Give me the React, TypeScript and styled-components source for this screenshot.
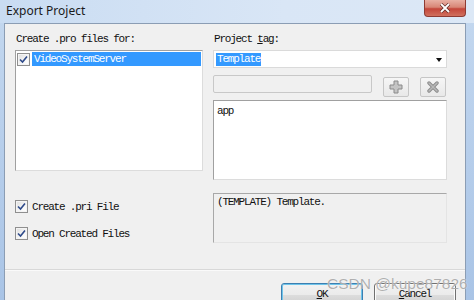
import React, { FC } from 'react'
import styled, { createGlobalStyle } from 'styled-components'

const GlobalStyle = createGlobalStyle`
  html, body {
    margin: 0;
    padding: 0;
    background: #f0f0f0;
  }
  body {
    width: 474px;
    height: 300px;
    overflow: hidden;
  }
`

const Window = styled.div`
  position: relative;
  width: 474px;
  height: 300px;
  display: grid;
  grid-template-rows: 23px 1fr;
  background: linear-gradient(to bottom, #c4d8ef 0%, #b9d0ec 40%, #a9c4e6 100%);
  overflow: hidden;
`

const TitleBar = styled.div`
  display: flex;
  align-items: flex-start;
  justify-content: space-between;
  padding-left: 6px;
  padding-right: 8px;
  background: linear-gradient(to right, #c9dcf2 0%, #d9e6f6 60%, #dce8f6 100%);
`

const Title = styled.span`
  margin-top: 3px;
  font-family: 'Noto Sans', 'Liberation Sans', sans-serif;
  font-size: 12px;
  line-height: 16px;
  color: #1a1a1a;
`

const CloseButton = styled.div`
  width: 42px;
  height: 17px;
  display: flex;
  align-items: center;
  justify-content: center;
  border: 1px solid #8e3b33;
  border-top: none;
  border-radius: 0 0 4px 4px;
  box-sizing: border-box;
  background: linear-gradient(to bottom, #e8b0a4 0%, #d88676 45%, #c4463a 55%, #d0705e 100%);
`

const Client = styled.div`
  margin: 0 8px 0 4px;
  display: grid;
  grid-template-rows: 246px 1fr;
  background: #f0f0f0;
  border: 1px solid #8b9db4;
  border-bottom: none;
`

const Main = styled.div`
  display: grid;
  grid-template-columns: 188px 234px;
  column-gap: 10px;
  padding: 9px 0 0 10px;
  border-bottom: 1px solid #d8d8d8;
`

const Column = styled.div`
  display: flex;
  flex-direction: column;
`

const Mono = styled.span`
  font-family: 'Liberation Mono', 'Courier New', monospace;
  font-size: 11px;
  letter-spacing: -1.2px;
  line-height: 12px;
  color: #111;
  white-space: pre;
`

const Label = styled(Mono)`
  display: block;
  height: 12px;
  margin-left: 1px;
`

const BoxText = styled(Mono)`
  display: block;
`

const Mnemonic = styled.span`
  text-decoration: underline;
`

const ListBox = styled.div<{ $height: number; $top: number }>`
  margin-top: ${p => p.$top}px;
  height: ${p => p.$height}px;
  box-sizing: border-box;
  background: #fff;
  border: 1px solid #a0a0a0;
  border-right-color: #dcdcdc;
  border-bottom-color: #dcdcdc;
  padding: 1px;
`

const ListRow = styled.div`
  display: flex;
  align-items: center;
  height: 14px;
`

const Selected = styled(Mono)`
  flex: 1;
  height: 14px;
  line-height: 14px;
  margin-left: 2px;
  padding-left: 2px;
  background: #3399ff;
  color: #fff;
`

const Box = styled.span`
  width: 11px;
  height: 11px;
  flex: none;
  display: flex;
  align-items: center;
  justify-content: center;
  border: 1px solid #8f8f8f;
  background: linear-gradient(135deg, #dcdcdc 0%, #f7f7f7 60%, #ffffff 100%);
  box-shadow: inset 0 0 0 1px #f4f4f4;
`

const CheckRow = styled.label<{ $top: number }>`
  display: flex;
  align-items: center;
  gap: 4px;
  margin-top: ${p => p.$top}px;
  height: 13px;
`

const Combo = styled.div`
  margin-top: 5px;
  height: 18px;
  box-sizing: border-box;
  display: flex;
  align-items: center;
  justify-content: space-between;
  padding: 0 4px 0 2px;
  background: #fff;
  border: 1px solid #dadada;
`

const Highlight = styled(Mono)`
  background: #3399ff;
  color: #fff;
  line-height: 13px;
  padding: 0 1px;
`

const Arrow = styled.span`
  width: 0;
  height: 0;
  margin-top: 2px;
  border-left: 3.5px solid transparent;
  border-right: 3.5px solid transparent;
  border-top: 4px solid #111;
`

const InputRow = styled.div`
  margin-top: 7px;
  display: flex;
  align-items: flex-start;
  height: 22px;
`

const Input = styled.div`
  width: 159px;
  height: 18px;
  box-sizing: border-box;
  border: 1px solid #c8c8c8;
  border-radius: 2px;
  background: #f0f0f0;
`

const IconButton = styled.div<{ $left: number }>`
  margin-top: 2px;
  margin-left: ${p => p.$left}px;
  width: 26px;
  height: 20px;
  box-sizing: border-box;
  display: flex;
  align-items: center;
  justify-content: center;
  border: 1px solid #c6c6c6;
  border-radius: 2px;
  background: linear-gradient(to bottom, #f6f6f6, #e8e8e8);
`

const Description = styled.div`
  margin-top: 13px;
  height: 50px;
  box-sizing: border-box;
  padding: 2px 3px;
  border: 1px solid #a8a8a8;
  border-right-color: #e4e4e4;
  border-bottom-color: #e4e4e4;
  background: #f0f0f0;
`

const Footer = styled.div`
  display: flex;
  justify-content: flex-end;
  gap: 11px;
  padding: 12px 9px 0 0;
  border-top: 1px solid #fafafa;
`

const Button = styled.div<{ $default?: boolean }>`
  width: 82px;
  height: 23px;
  box-sizing: border-box;
  display: flex;
  justify-content: center;
  padding-top: 4px;
  border: 1px solid ${p => (p.$default ? '#3c7fb1' : '#707070')};
  border-radius: 3px;
  background: linear-gradient(to bottom, #f2f2f2 0%, #ebebeb 50%, #dddddd 51%, #cfcfcf 100%);
  box-shadow: ${p => (p.$default ? 'inset 0 0 0 1px #6fc4ea' : 'inset 0 0 0 1px #fcfcfc')};
`

const Watermark = styled.span`
  position: absolute;
  left: 327px;
  top: 275px;
  white-space: nowrap;
  font-family: 'Liberation Sans', Arial, sans-serif;
  font-size: 15.5px;
  line-height: 18px;
  color: rgba(150, 150, 150, 0.75);
  text-shadow: 0 0 1px #fff;
  pointer-events: none;
`

const Check: FC = () => (
  <svg width="9" height="9" viewBox="0 0 9 9">
    <path d="M1 4.5 L3.5 7 L8 1.5" fill="none" stroke="#2e4a8a" strokeWidth="1.6" />
  </svg>
)

const CheckBox: FC = () => (
  <Box>
    <Check />
  </Box>
)

const PlusIcon: FC = () => (
  <svg width="14" height="14" viewBox="0 0 14 14">
    <path d="M5 1h4v4h4v4h-4v4h-4v-4h-4v-4h4z" fill="#c4c4c4" stroke="#8a8a8a" strokeWidth="1" />
  </svg>
)

const CrossIcon: FC = () => (
  <svg width="12" height="12" viewBox="0 0 12 12">
    <path d="M2 2 L10 10 M10 2 L2 10" stroke="#8a8a8a" strokeWidth="3.4" strokeLinecap="round" />
    <path d="M2 2 L10 10 M10 2 L2 10" stroke="#b8b8b8" strokeWidth="1.6" strokeLinecap="round" />
  </svg>
)

const CloseGlyph: FC = () => (
  <svg width="12" height="10" viewBox="0 0 12 10">
    <path d="M2 1 L10 9 M10 1 L2 9" stroke="#5a2a24" strokeWidth="3.2" />
    <path d="M2 1 L10 9 M10 1 L2 9" stroke="#ffffff" strokeWidth="1.8" />
  </svg>
)

export default function App() {
  return (
    <Window>
      <GlobalStyle />
      <TitleBar>
        <Title>Export Project</Title>
        <CloseButton>
          <CloseGlyph />
        </CloseButton>
      </TitleBar>

      <Client>
        <Main>
          <Column>
            <Label>Create .pro files for:</Label>
            <ListBox $height={121} $top={5}>
              <ListRow>
                <CheckBox />
                <Selected>VideoSystemServer</Selected>
              </ListRow>
            </ListBox>

            <CheckRow $top={29}>
              <CheckBox />
              <Mono>Create .pri File</Mono>
            </CheckRow>
            <CheckRow $top={14}>
              <CheckBox />
              <Mono>Open Created Files</Mono>
            </CheckRow>
          </Column>

          <Column>
            <Label>
              Project <Mnemonic>t</Mnemonic>ag:
            </Label>
            <Combo>
              <Highlight>Template</Highlight>
              <Arrow />
            </Combo>

            <InputRow>
              <Input />
              <IconButton $left={11}>
                <PlusIcon />
              </IconButton>
              <IconButton $left={11}>
                <CrossIcon />
              </IconButton>
            </InputRow>

            <ListBox $height={80} $top={3}>
              <BoxText style={{ padding: '3px 0 0 2px' }}>app</BoxText>
            </ListBox>

            <Description>
              <BoxText>(TEMPLATE) Template.</BoxText>
            </Description>
          </Column>
        </Main>

        <Footer>
          <Button $default>
            <Mono>
              <Mnemonic>O</Mnemonic>K
            </Mono>
          </Button>
          <Button>
            <Mono>
              <Mnemonic>C</Mnemonic>ancel
            </Mono>
          </Button>
        </Footer>
      </Client>

      <Watermark>CSDN @kupe87826</Watermark>
    </Window>
  )
}
